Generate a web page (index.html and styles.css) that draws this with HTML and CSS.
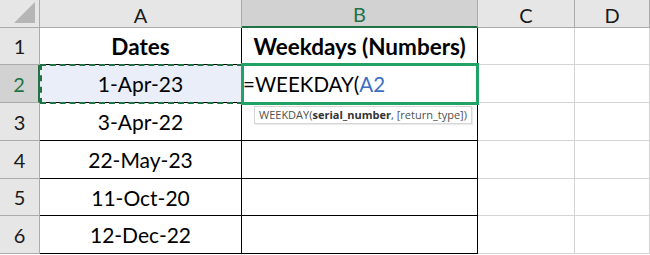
FILE: index.html
```html
<!DOCTYPE html>
<html lang="en">
<head>
    <meta charset="UTF-8">
    <title>WEEKDAY</title>
    <link rel="stylesheet" href="styles.css">
</head>
<body>
    <div class="sheet">
        <!-- column headers -->
        <div class="hd corner"><span class="tri"></span></div>
        <div class="hd col">A</div>
        <div class="hd col sel-col">B</div>
        <div class="hd col">C</div>
        <div class="hd col">D</div>

        <div class="hd row">1</div>
        <div class="cell tb bold">Dates</div>
        <div class="cell tb bold">Weekdays (Numbers)</div>
        <div class="cell"></div>
        <div class="cell"></div>

        <div class="hd row sel-row">2</div>
        <div class="cell tb copied">1-Apr-23</div>
        <div class="cell tb edit">=WEEKDAY(<span class="ref">A2</span></div>
        <div class="cell"></div>
        <div class="cell"></div>

        <div class="hd row">3</div>
        <div class="cell tb">3-Apr-22</div>
        <div class="cell tb"></div>
        <div class="cell"></div>
        <div class="cell"></div>

        <div class="hd row">4</div>
        <div class="cell tb">22-May-23</div>
        <div class="cell tb"></div>
        <div class="cell"></div>
        <div class="cell"></div>

        <div class="hd row">5</div>
        <div class="cell tb">11-Oct-20</div>
        <div class="cell tb"></div>
        <div class="cell"></div>
        <div class="cell"></div>

        <div class="hd row">6</div>
        <div class="cell tb">12-Dec-22</div>
        <div class="cell tb"></div>
        <div class="cell"></div>
        <div class="cell"></div>

        <!-- overlays -->
        <div class="ants"></div>
        <div class="active"></div>
        <div class="tip">WEEKDAY(<b>serial_number</b>, [return_type])</div>
    </div>
</body>
</html>
```

FILE: styles.css
```css
* {
    margin: 0;
    padding: 0;
    box-sizing: border-box;
}

body {
    background: #ffffff;
    font-family: Lato, 'Open Sans', sans-serif;
    color: #000;
    overflow: hidden;
}

.sheet {
    position: relative;
    display: grid;
    grid-template-columns: 40px 202px 236px 97px 75px;
    grid-template-rows: 28px 37px 38px 38px 38px 37px 38px;
    width: 650px;
}

/* headers */
.hd {
    background: #e6e6e6;
    border-right: 1px solid #ababab;
    border-bottom: 1px solid #ababab;
    display: flex;
    align-items: center;
    justify-content: center;
    font-size: 20px;
    color: #1a1a1a;
}

.corner {
    position: relative;
}

.tri {
    position: absolute;
    right: 4px;
    bottom: 4px;
    width: 0;
    height: 0;
    border-left: 21px solid transparent;
    border-bottom: 21px solid #b5b5b5;
}

.col {
    padding-top: 2px;
}

.sel-col {
    background: #d2d2d2;
    color: #217346;
    border-bottom: 2px solid #217346;
}

.row {
    border-right: 1px solid #ababab;
}

.sel-row {
    background: #d2d2d2;
    color: #217346;
    border-right: 2px solid #217346;
}

/* cells */
.cell {
    border-right: 1px solid #d4d4d4;
    border-bottom: 1px solid #d4d4d4;
    display: flex;
    align-items: center;
    justify-content: center;
    font-size: 21px;
}

.cell.tb {
    border-right-color: #000;
    border-bottom-color: #000;
}

.bold {
    font-weight: 700;
    font-size: 22.5px;
}

.copied {
    background: #e9eef8;
}

.edit {
    justify-content: flex-start;
    padding-left: 1px;
    font-size: 20.5px;
}

.ref {
    color: #3c6fc4;
}

/* marching ants on A2 */
.ants {
    position: absolute;
    left: 40px;
    top: 64px;
    width: 203px;
    height: 40px;
    border: 2px dashed #217346;
}

/* active cell B2 */
.active {
    position: absolute;
    left: 241px;
    top: 63px;
    width: 238px;
    height: 42px;
    border: 3px solid #21a366;
}

.tip {
    position: absolute;
    left: 254px;
    top: 106px;
    height: 18px;
    padding: 0 4px;
    background: #fff;
    border: 1px solid #d6d6d6;
    box-shadow: 1px 1px 1px rgba(0,0,0,0.08);
    font-family: 'Open Sans', sans-serif;
    font-size: 11px;
    line-height: 16px;
    color: #505050;
}

.tip b {
    color: #333;
}
```
